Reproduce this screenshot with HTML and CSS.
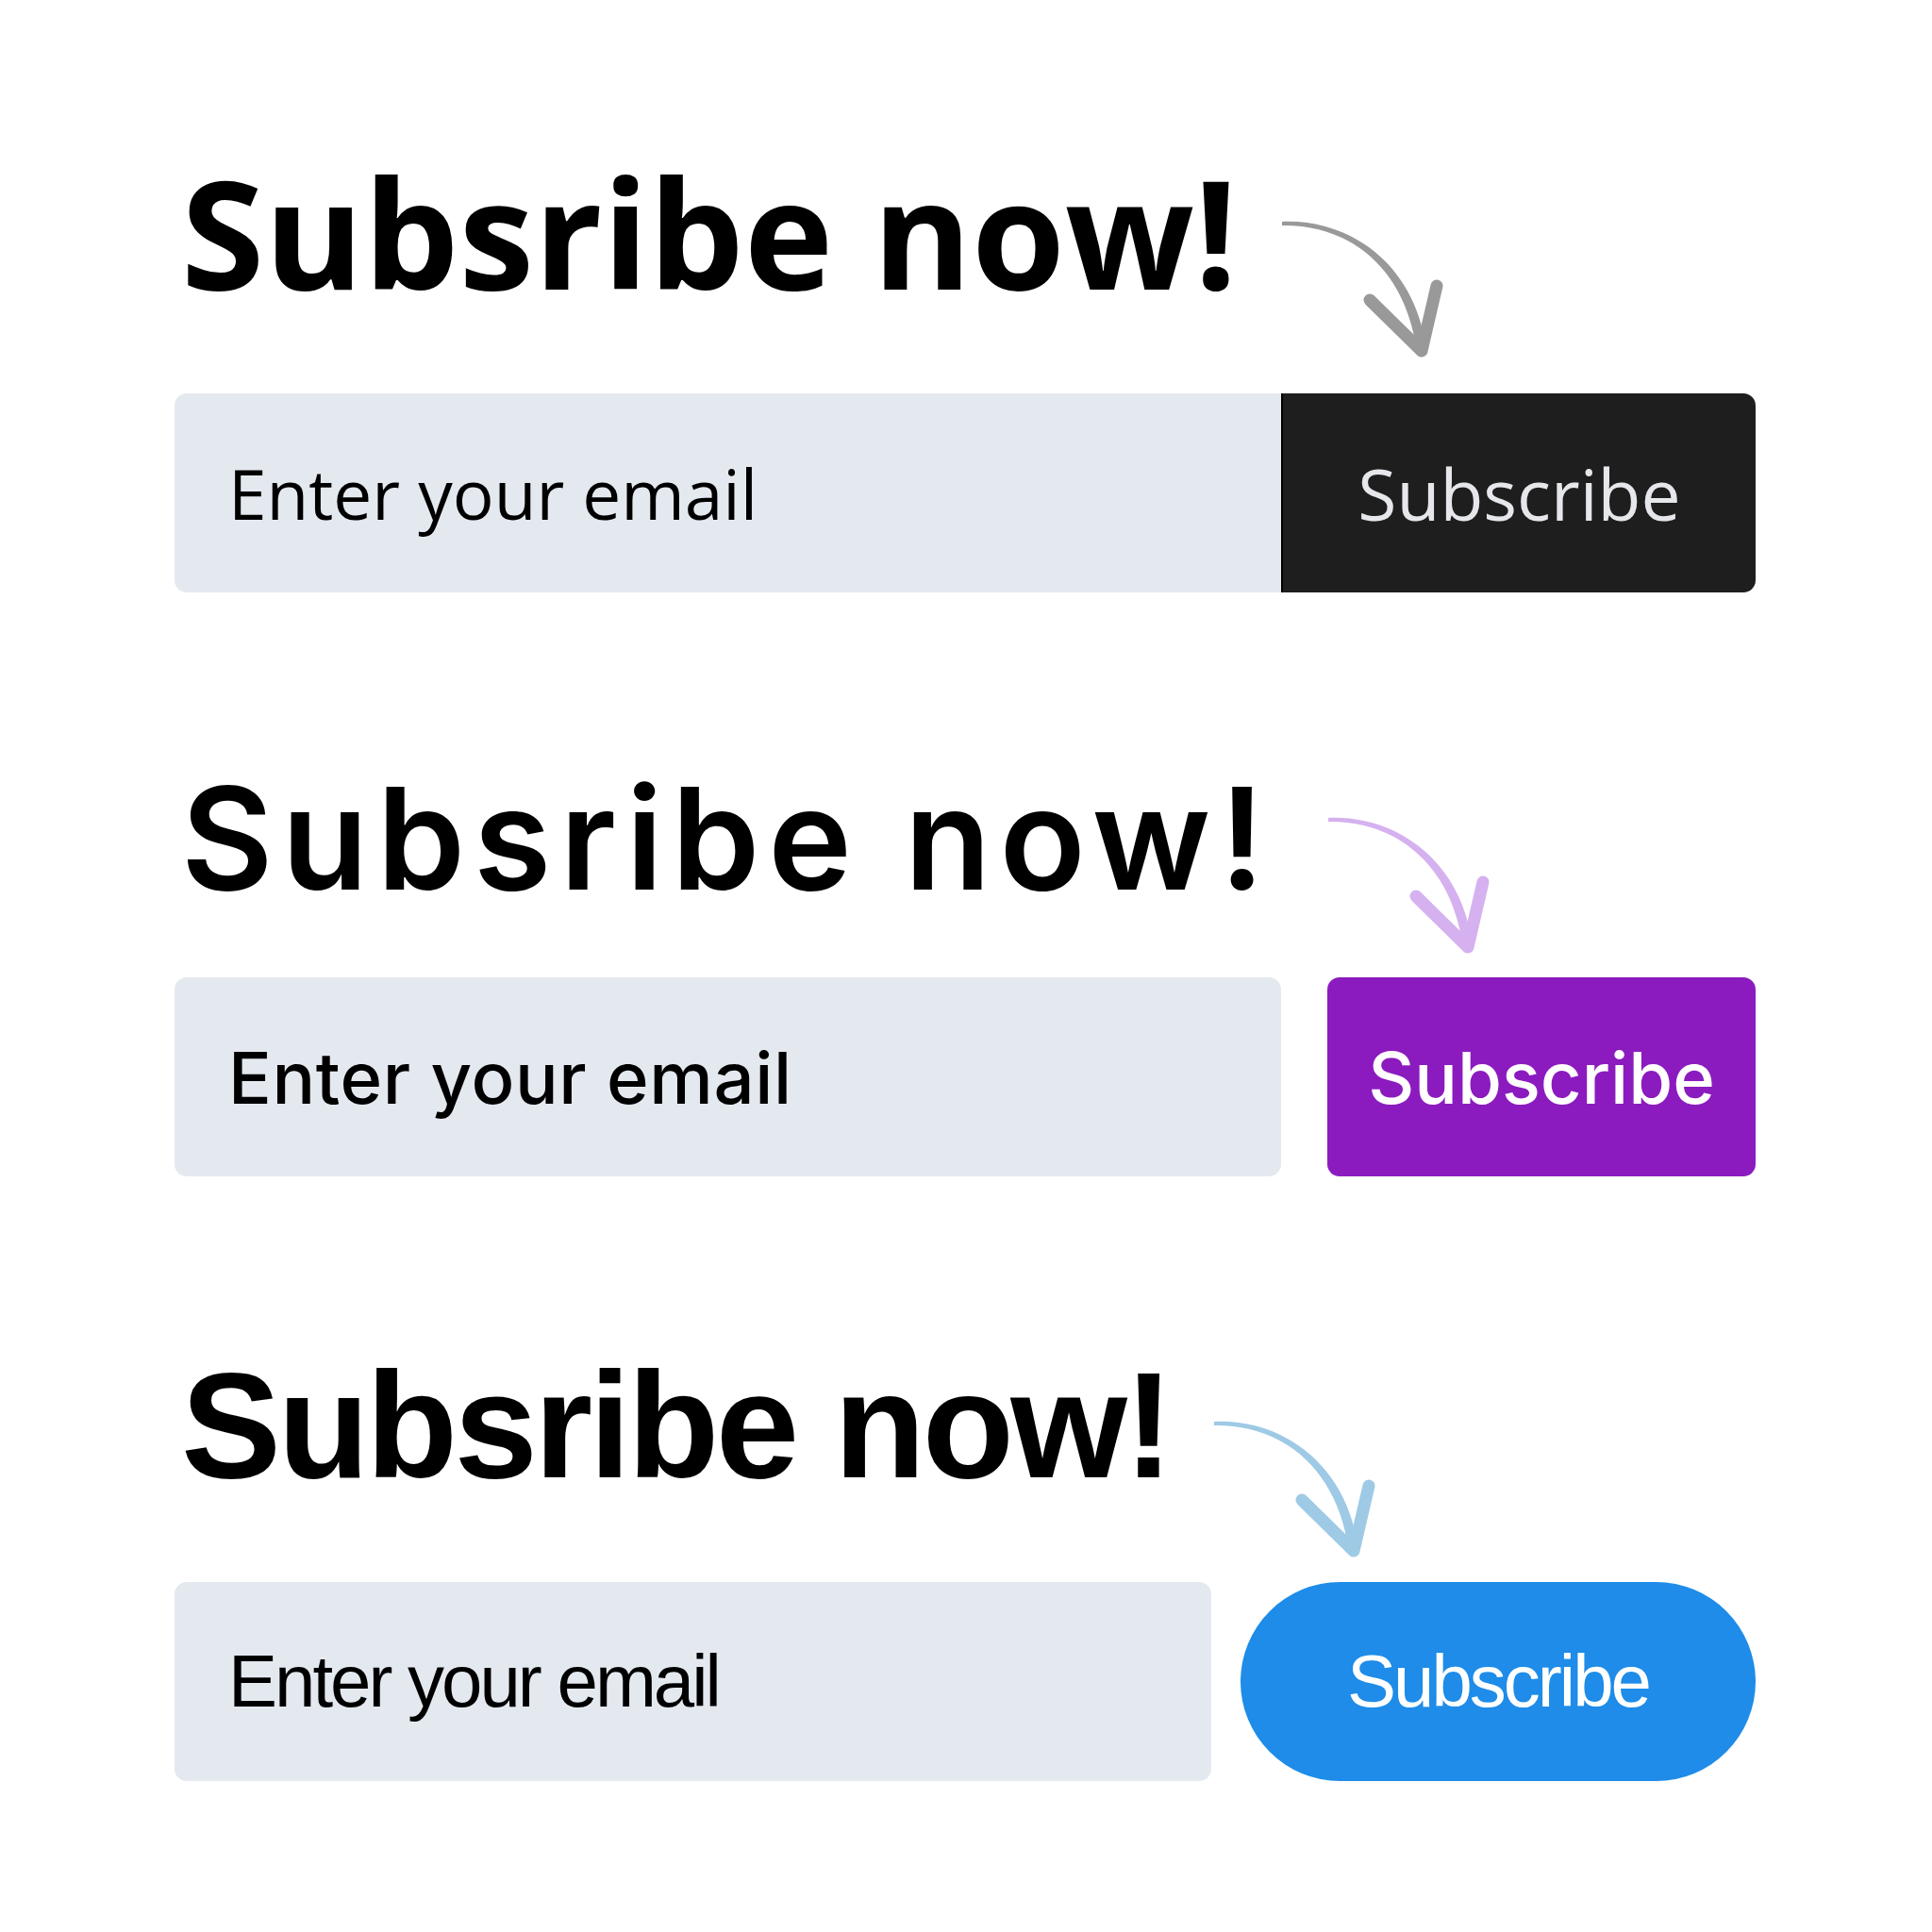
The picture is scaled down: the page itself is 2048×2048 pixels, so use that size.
FILE: index.html
```html
<!DOCTYPE html>
<html lang="en">
<head>
<meta charset="utf-8">
<title>Subscribe variants</title>
<link rel="stylesheet" href="styles.css">
</head>
<body>
<main class="page">
  <section class="promo promo--dark">
    <h2 class="promo__title">Subsribe now!</h2>
    <svg class="promo__arrow" viewBox="0 0 200 170" width="200" height="170" aria-hidden="true">
      <path class="arrow__shaft" d="M19 15 C90 12 155 58 170 139 L160 141 C145 62 90 18 19 19 Z"/>
      <path class="arrow__head" d="M112 98 L167 152 L183 83"/>
    </svg>
    <form class="promo__form">
      <input class="promo__input" type="email" placeholder="Enter your email">
      <button class="promo__btn" type="button">Subscribe</button>
    </form>
  </section>

  <section class="promo promo--purple">
    <h2 class="promo__title">Subsribe now!</h2>
    <svg class="promo__arrow" viewBox="0 0 200 170" width="200" height="170" aria-hidden="true">
      <path class="arrow__shaft" d="M19 15 C90 12 155 58 170 139 L160 141 C145 62 90 18 19 19 Z"/>
      <path class="arrow__head" d="M112 98 L167 152 L183 83"/>
    </svg>
    <form class="promo__form">
      <input class="promo__input" type="email" placeholder="Enter your email">
      <button class="promo__btn" type="button">Subscribe</button>
    </form>
  </section>

  <section class="promo promo--blue">
    <h2 class="promo__title">Subsribe now!</h2>
    <svg class="promo__arrow" viewBox="0 0 200 170" width="200" height="170" aria-hidden="true">
      <path class="arrow__shaft" d="M19 15 C90 12 155 58 170 139 L160 141 C145 62 90 18 19 19 Z"/>
      <path class="arrow__head" d="M112 98 L167 152 L183 83"/>
    </svg>
    <form class="promo__form">
      <input class="promo__input" type="email" placeholder="Enter your email">
      <button class="promo__btn" type="button">Subscribe</button>
    </form>
  </section>
</main>
</body>
</html>
```

FILE: styles.css
```css
html, body {
  margin: 0;
  padding: 0;
  background: #ffffff;
}

.page {
  width: 1676px;
  margin-left: 185px;
  padding-top: 165px;
  display: flex;
  flex-direction: column;
}

.promo {
  position: relative;
  display: flex;
  flex-direction: column;
}

.promo__title {
  margin: 0;
  padding-left: 7px;
  line-height: 1;
  color: #000;
  white-space: nowrap;
}

.promo__arrow {
  position: absolute;
  stroke-linecap: round;
  stroke-linejoin: round;
}

.arrow__shaft {
  stroke: none;
}
.arrow__head {
  fill: none;
  stroke-width: 13;
}

.promo__form {
  display: flex;
  height: 211px;
  margin: 0;
}

.promo__input {
  flex: 1;
  min-width: 0;
  border: none;
  outline: none;
  margin: 0;
  background: #e4e9f0;
  padding: 0 0 0 57px;
  color: #000;
  border-radius: 13px;
}

.promo__input::placeholder {
  color: #000;
  opacity: 1;
}

.promo__btn {
  border: none;
  margin: 0;
  padding: 0;
  cursor: pointer;
}

/* ---------- Variant 1: dark ---------- */
.promo--dark .promo__title {
  font-family: "Open Sans", sans-serif;
  font-weight: 700;
  font-size: 160px;
}
.promo--dark .promo__arrow { left: 1155px; top: 55px; }
.promo--dark .arrow__shaft { fill: #999999; }
.promo--dark .arrow__head { stroke: #999999; }
.promo--dark .promo__form { margin-top: 92px; }
.promo--dark .promo__input,
.promo--dark .promo__btn {
  font-family: "Open Sans", sans-serif;
  font-weight: 400;
}
.promo--dark .promo__input {
  font-size: 73px;
  border-radius: 13px 0 0 13px;
}
.promo--dark .promo__btn {
  font-size: 75px;
  width: 503px;
  background: #1e1e1e;
  color: #e5e7eb;
  border-left: 2px solid #000;
  border-radius: 0 13px 13px 0;
}

/* ---------- Variant 2: purple ---------- */
.promo--purple { margin-top: 186px; }
.promo--purple .promo__title {
  font-family: Inter, sans-serif;
  font-weight: 600;
  font-size: 150px;
  letter-spacing: 9px;
}
.promo--purple .promo__arrow { left: 1204px; top: 38px; }
.promo--purple .arrow__shaft { fill: #d5b1f0; }
.promo--purple .arrow__head { stroke: #d5b1f0; }
.promo--purple .promo__form { margin-top: 72px; gap: 49px; }
.promo--purple .promo__input,
.promo--purple .promo__btn {
  font-family: Inter, sans-serif;
  font-size: 76px;
  font-weight: 500;
}
.promo--purple .promo__input { letter-spacing: 0.6px; }
.promo--purple .promo__btn {
  width: 454px;
  background: #8b1bbf;
  color: #ffffff;
  border-radius: 13px;
}

/* ---------- Variant 3: blue ---------- */
.promo--blue { margin-top: 185px; }
.promo--blue .promo__title {
  font-family: "Liberation Sans", Arial, sans-serif;
  font-weight: 700;
  font-size: 159px;
  letter-spacing: -3.6px;
}
.promo--blue .promo__arrow { left: 1083px; top: 60px; }
.promo--blue .arrow__shaft { fill: #9ecae5; }
.promo--blue .arrow__head { stroke: #9ecae5; }
.promo--blue .promo__form { margin-top: 86px; gap: 31px; }
.promo--blue .promo__input,
.promo--blue .promo__btn {
  font-family: "Liberation Sans", Arial, sans-serif;
  font-size: 78px;
  font-weight: 400;
  letter-spacing: -3px;
}
.promo--blue .promo__btn {
  width: 546px;
  background: #1e8ce8;
  color: #ffffff;
  border-radius: 106px;
}
```
